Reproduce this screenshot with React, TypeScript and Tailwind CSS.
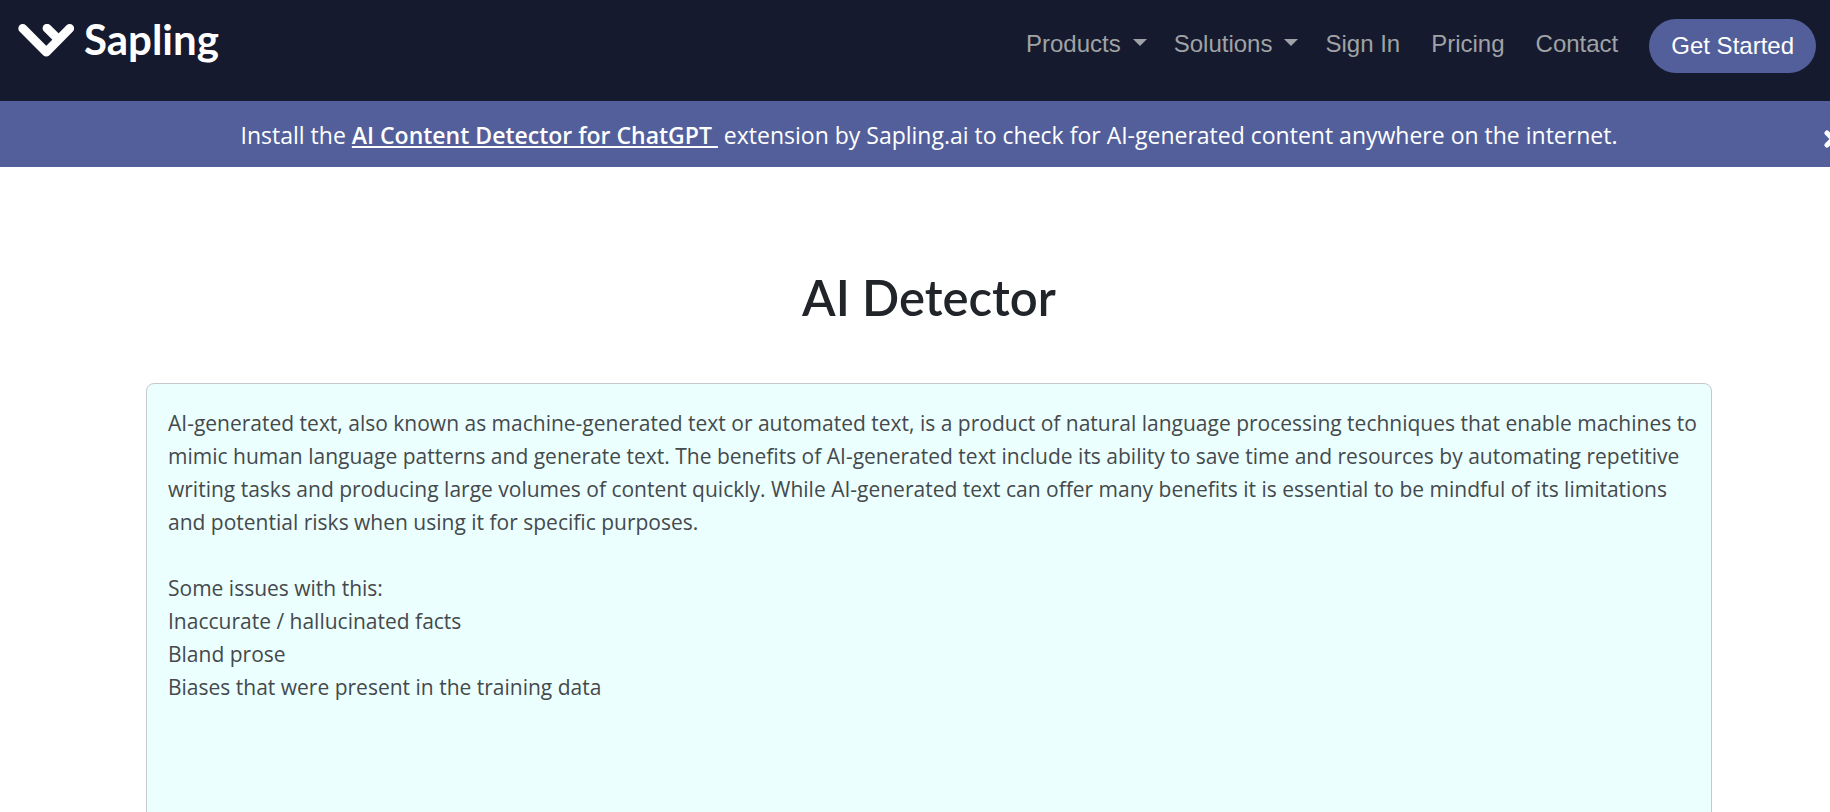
import { useState } from "react";

const SAMPLE_TEXT = `AI-generated text, also known as machine-generated text or automated text, is a product of natural language processing techniques that enable machines to mimic human language patterns and generate text. The benefits of AI-generated text include its ability to save time and resources by automating repetitive writing tasks and producing large volumes of content quickly. While AI-generated text can offer many benefits it is essential to be mindful of its limitations and potential risks when using it for specific purposes.

Some issues with this:
Inaccurate / hallucinated facts
Bland prose
Biases that were present in the training data`;

function Logo() {
  return (
    <a href="#" className="flex items-start text-white">
      <svg
        className="mt-6 h-9 w-14 shrink-0"
        viewBox="0 0 56 36"
        fill="none"
        stroke="currentColor"
        strokeWidth="8.8"
        strokeLinecap="round"
        strokeLinejoin="round"
        aria-hidden="true"
      >
        <path d="M4.7 4.4 28.3 28.2 51.7 4.4" />
        <path d="M29 4.2 40 15" />
      </svg>
      <span className="pl-2.5 pt-[15px] font-['Lato',sans-serif] text-[42px] leading-[48px] font-bold">
        Sapling
      </span>
    </a>
  );
}

function Caret() {
  return (
    <svg
      className="mb-[3px] h-[7px] w-[14px]"
      viewBox="0 0 14 7"
      fill="currentColor"
      aria-hidden="true"
    >
      <path d="M0 0h14L7 7z" />
    </svg>
  );
}

function MenuButton({ label }: { label: string }) {
  return (
    <button type="button" className="flex items-center gap-3" aria-haspopup="menu">
      {label}
      <Caret />
    </button>
  );
}

function Header() {
  return (
    <header className="flex h-[101px] items-start justify-between bg-[#161a2f] pr-3.5 pl-[18px]">
      <Logo />
      <nav className="flex items-start gap-[31px] pt-[19px] font-['Liberation_Sans',Arial,sans-serif] text-2xl leading-[50px] text-[#a0a3a5]">
        <div className="flex items-start gap-[27px]">
          <MenuButton label="Products" />
          <MenuButton label="Solutions" />
          <a href="#">Sign In</a>
        </div>
        <a href="#">Pricing</a>
        <a href="#">Contact</a>
        <a href="#" className="rounded-full bg-[#535f9b] px-[22px] leading-[54px] text-white">
          Get Started
        </a>
      </nav>
    </header>
  );
}

function Banner({ onClose }: { onClose: () => void }) {
  return (
    <div className="relative bg-[#535f9b] pt-[17px] pb-[15px] text-center text-[23px] leading-[34px] text-white">
      <p>
        Install the{" "}
        <a href="#" className="font-semibold underline decoration-2 underline-offset-2">
          AI Content Detector for ChatGPT&nbsp;
        </a>{" "}
        extension by Sapling.ai to check for AI-generated content anywhere on the internet.
      </p>
      <button
        type="button"
        aria-label="Close"
        onClick={onClose}
        className="absolute top-[29px] right-4"
      >
        <svg
          className="h-[18px] w-[18px]"
          viewBox="0 0 18 18"
          stroke="currentColor"
          strokeWidth="5"
          strokeLinecap="round"
          aria-hidden="true"
        >
          <path d="M3 3 15 15M15 3 3 15" />
        </svg>
      </button>
    </div>
  );
}

export default function App() {
  const [text, setText] = useState(SAMPLE_TEXT);
  const [bannerOpen, setBannerOpen] = useState(true);

  return (
    <div className="h-screen overflow-hidden bg-white font-['Open_Sans','Noto_Sans',sans-serif]">
      <Header />
      <div className="w-[calc(100%+28px)]">
        {bannerOpen && <Banner onClose={() => setBannerOpen(false)} />}
        <main className="px-[146px] pt-[98px]">
          <h1 className="text-center font-['Lato',sans-serif] text-[49px] leading-[64px] font-semibold text-[#212529]">
            <label htmlFor="content">AI Detector</label>
          </h1>
          <textarea
            id="content"
            value={text}
            onChange={(e) => setText(e.target.value)}
            spellCheck={false}
            className="mt-[54px] block h-[520px] w-full resize-none rounded-lg border border-[#c3c9cc] bg-[#ebffff] py-[23px] pr-2.5 pl-[21px] text-[21px] leading-[33px] text-[#45494c] outline-none"
          />
        </main>
      </div>
    </div>
  );
}
